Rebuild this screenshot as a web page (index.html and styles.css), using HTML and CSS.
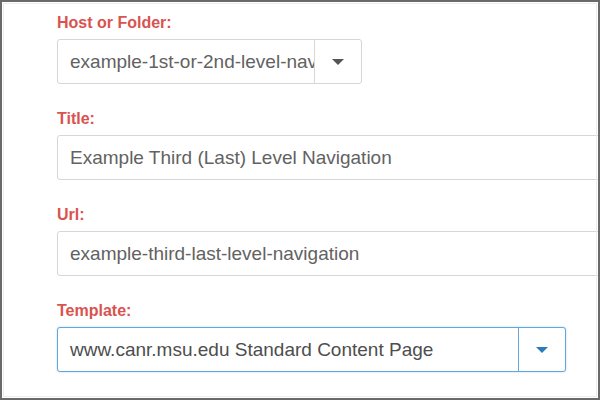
FILE: index.html
```html
<!DOCTYPE html>
<html>
<head>
<meta charset="utf-8">
<link rel="stylesheet" href="styles.css">
</head>
<body>
<div class="frame">
  <div class="form">
    <div class="field">
      <div class="label">Host or Folder:</div>
      <div class="select select-host">
        <div class="select-value">example-1st-or-2nd-level-navigation</div>
        <div class="select-btn"><span class="caret"></span></div>
      </div>
    </div>
    <div class="field">
      <div class="label">Title:</div>
      <div class="input">Example Third (Last) Level Navigation</div>
    </div>
    <div class="field">
      <div class="label">Url:</div>
      <div class="input">example-third-last-level-navigation</div>
    </div>
    <div class="field">
      <div class="label">Template:</div>
      <div class="select select-template focused">
        <div class="select-value">www.canr.msu.edu Standard Content Page</div>
        <div class="select-btn"><span class="caret"></span></div>
      </div>
    </div>
  </div>
</div>
</body>
</html>
```

FILE: styles.css
```css
html, body {
  margin: 0;
  padding: 0;
  background: #ffffff;
}

.frame {
  position: relative;
  width: 600px;
  height: 400px;
  box-sizing: border-box;
  border: 2px solid #6a6a6a;
  overflow: hidden;
  background: #fff;
  font-family: "Liberation Sans", Arial, sans-serif;
}

.frame::after {
  content: "";
  position: absolute;
  inset: 1px;
  border: 1px solid #ececec;
  pointer-events: none;
}

.form {
  padding: 11px 0 0 55px;
  display: flex;
  flex-direction: column;
  gap: 25px;
}

.field {
  display: flex;
  flex-direction: column;
  gap: 6px;
}

.label {
  font-size: 16px;
  line-height: 20px;
  font-weight: bold;
  color: #d9534f;
}

.input,
.select {
  box-sizing: border-box;
  height: 45px;
  border: 1px solid #d6d6d6;
  border-radius: 3px;
  background: #fff;
  color: #626262;
  font-size: 19px;
  display: flex;
  align-items: center;
}

.input {
  width: 600px;
  padding: 0 12px;
  white-space: nowrap;
}

.select-host {
  width: 305px;
}

.select-template {
  width: 509px;
  color: #4e4e4e;
}

.select.focused {
  border-color: #62a6dc;
  box-shadow: 0 0 2px rgba(98, 166, 220, 0.5);
}

.select-value {
  flex: 1;
  min-width: 0;
  padding: 0 12px;
  white-space: nowrap;
  overflow: hidden;
}

.select-btn {
  width: 46px;
  height: 100%;
  border-left: 1px solid #d6d6d6;
  display: flex;
  align-items: center;
  justify-content: center;
}

.focused .select-btn {
  border-left-color: #62a6dc;
}

.caret {
  width: 0;
  height: 0;
  border-left: 6px solid transparent;
  border-right: 6px solid transparent;
  border-top: 6px solid #555;
}

.focused .caret {
  border-top-color: #2b7bbf;
}
```
